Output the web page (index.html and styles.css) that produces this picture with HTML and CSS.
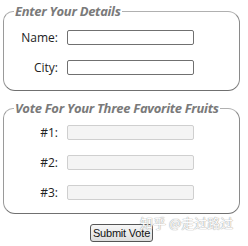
FILE: index.html
```html
<!DOCTYPE html>
<html lang="en">
<head>
  <meta charset="UTF-8">
  <title>Fruit Vote</title>
  <link rel="stylesheet" href="styles.css">
</head>
<body>
  <form class="vote-form">
    <fieldset class="group">
      <legend>Enter Your Details</legend>
      <div class="row">
        <label for="name">Name:</label>
        <input type="text" id="name" class="field">
      </div>
      <div class="row">
        <label for="city">City:</label>
        <input type="text" id="city" class="field">
      </div>
    </fieldset>

    <fieldset class="group fruits">
      <legend>Vote For Your Three Favorite Fruits</legend>
      <div class="row">
        <label for="f1">#1:</label>
        <input type="text" id="f1" class="field off" disabled>
      </div>
      <div class="row">
        <label for="f2">#2:</label>
        <input type="text" id="f2" class="field off" disabled>
      </div>
      <div class="row">
        <label for="f3">#3:</label>
        <input type="text" id="f3" class="field off" disabled>
      </div>
    </fieldset>

    <div class="submit-bar">
      <button type="button" class="submit">Submit Vote</button>
    </div>
  </form>

  <div class="watermark">知乎 @走过路过</div>
</body>
</html>
```

FILE: styles.css
```css
body {
  margin: 0;
  padding: 0 3px;
  font-family: 'Open Sans', sans-serif;
  font-size: 12px;
  color: #222;
  background: white;
}

.vote-form {
  width: 237px;
}

.group {
  margin: 3px 0 0;
  padding: 3px 0 8px;
  border: 1px solid #999;
  border-color: #b0b0b0 #8a8a8a #707070 #9a9a9a;
  border-radius: 10px 12px 12px 12px;
}

.group legend {
  margin-left: 10px;
  padding: 0 1px;
  font-family: 'Open Sans', sans-serif;
  font-size: 13px;
  font-weight: bold;
  font-style: italic;
  line-height: 16px;
  color: #7a7a7a;
  letter-spacing: -0.3px;
}

.fruits {
  margin-top: 9px;
  padding: 1px 0 6px;
}

.row {
  display: flex;
  align-items: center;
  height: 30px;
}

.row label {
  width: 54px;
  text-align: right;
  margin-right: 9px;
}

.field {
  box-sizing: border-box;
  width: 127px;
  height: 15px;
  padding: 0 2px;
  border: 1px solid #707070;
  border-radius: 2px;
  background: white;
}

.field.off {
  border-color: #cfcfcf;
  background: #f4f4f4;
}

.submit-bar {
  display: flex;
  justify-content: center;
  margin-top: 10px;
}

.submit {
  height: 18px;
  padding: 0 2px;
  font-family: 'Liberation Sans', Arial, sans-serif;
  font-size: 11px;
  letter-spacing: -0.2px;
  color: #111;
  background: linear-gradient(#f6f6f6, #dedede);
  border: 1px solid #555;
  border-radius: 3px;
}

.watermark {
  position: absolute;
  left: 140px;
  top: 216px;
  font-family: 'Noto Sans CJK SC', sans-serif;
  font-size: 13px;
  line-height: 14px;
  color: #fcfcfc;
  text-shadow: 0 0 1px #999, 0 0 1px #aaa;
}
```
